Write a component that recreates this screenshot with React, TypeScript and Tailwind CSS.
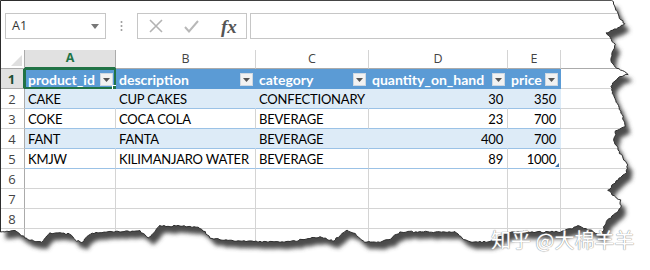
import React from "react";

const COLS = [
  { letter: "A", w: 91 },
  { letter: "B", w: 140 },
  { letter: "C", w: 113 },
  { letter: "D", w: 139 },
  { letter: "E", w: 53 },
  { letter: "F", w: 120 },
];

const TABLE = [
  ["product_id", "description", "category", "quantity_on_hand", "price"],
  ["CAKE", "CUP CAKES", "CONFECTIONARY", "30", "350"],
  ["COKE", "COCA COLA", "BEVERAGE", "23", "700"],
  ["FANT", "FANTA", "BEVERAGE", "400", "700"],
  ["KMJW", "KILIMANJARO WATER", "BEVERAGE", "89", "1000"],
];

const ROW_COUNT = 9;

// key points of the torn right + bottom edge
const TEAR = [
  [612, 0], [616, 10], [620, 18], [625, 24], [618, 28], [606, 33], [610, 38],
  [615, 44], [611, 60], [614, 66], [622, 71], [628, 74], [618, 78], [612, 83],
  [611, 90], [617, 104], [622, 115], [625, 126], [616, 131], [614, 140],
  [618, 150], [623, 158], [628, 165], [626, 172], [618, 180], [608, 190],
  [614, 196], [620, 200], [621, 208], [615, 214], [608, 220], [604, 227],
  [601, 236], [590, 230], [578, 226], [570, 229], [560, 232], [510, 232],
  [500, 237], [490, 242], [470, 242], [462, 238], [455, 232], [400, 232],
  [392, 238], [380, 242], [365, 242], [355, 234], [347, 230], [340, 236],
  [333, 241], [320, 237], [300, 240], [290, 242], [260, 242], [240, 241],
  [222, 240], [210, 238], [205, 232], [200, 228], [180, 226], [160, 226],
  [153, 233], [148, 238], [140, 231], [110, 232], [92, 233], [82, 242],
  [75, 240], [70, 234], [50, 233], [42, 242], [28, 240], [20, 234],
  [15, 231], [5, 232], [0.5, 232],
];

const jagged = (pts: number[][], step: number, amp: number) => {
  const out: number[][] = [];
  for (let i = 0; i < pts.length - 1; i++) {
    const [x1, y1] = pts[i];
    const [x2, y2] = pts[i + 1];
    const len = Math.hypot(x2 - x1, y2 - y1);
    const n = Math.max(1, Math.round(len / step));
    const nx = -(y2 - y1) / len;
    const ny = (x2 - x1) / len;
    for (let k = 0; k < n; k++) {
      const t = k / n;
      const r = Math.sin((out.length + 1) * 12.9898) * 43758.5453;
      const j = (r - Math.floor(r) - 0.5) * amp;
      out.push([x1 + (x2 - x1) * t + nx * j, y1 + (y2 - y1) * t + ny * j]);
    }
  }
  out.push(pts[pts.length - 1]);
  return out;
};

const edge = jagged(TEAR, 2, 1.6);
const paper =
  "M0.5 0.5 " +
  edge.map(([x, y]) => `L${x.toFixed(1)} ${y.toFixed(1)}`).join(" ") +
  " Z";
const outside = "M0 0H650V270H0Z " + paper;

const TornEdge = () => (
  <svg className="absolute inset-0" width={650} height={270}>
    <defs>
      <clipPath id="outside">
        <path d={outside} clipRule="evenodd" />
      </clipPath>
      <filter id="blur" x="-10%" y="-10%" width="120%" height="120%">
        <feGaussianBlur stdDeviation="2.2" />
      </filter>
    </defs>
    <path d={outside} fill="#fff" fillRule="evenodd" />
    <g clipPath="url(#outside)">
      <path d={paper} transform="translate(5 7)" fill="#4b4b4b" filter="url(#blur)" />
    </g>
    <path d={paper} fill="none" stroke="#2d2d2d" strokeWidth={1} />
  </svg>
);

const FilterButton = () => (
  <div className="flex h-[13px] w-[13px] shrink-0 items-center justify-center border border-[#cfd8e2] bg-[#f2f2f2]">
    <svg width="7" height="4" viewBox="0 0 7 4">
      <path d="M0 0H7L3.5 4Z" fill="#555" />
    </svg>
  </div>
);

const cellBg = (r: number) => {
  if (r === 1) return "bg-[#5b9bd5] border-r-[#5b9bd5] border-b-[#5b9bd5]";
  if (r === 2 || r === 4) return "bg-[#ddebf7] border-r-[#ddebf7] border-b-[#9bc2e6]";
  if (r === 3 || r === 5) return "bg-white border-r-[#d4d4d4] border-b-[#9bc2e6]";
  return "bg-white border-r-[#d4d4d4] border-b-[#d4d4d4]";
};

export default function App() {
  return (
    <div className="relative h-[270px] w-[650px] overflow-hidden bg-white font-['Open_Sans',sans-serif]">
      {/* formula bar */}
      <div className="flex h-[50px] items-start pl-[5px] pt-[13px]">
        <div className="flex h-[26px] w-[101px] items-center justify-between border border-[#c6c6c6] pl-[6px] pr-[6px] text-[12.5px] text-[#333]">
          <span>A1</span>
          <svg width="8" height="5" viewBox="0 0 8 5">
            <path d="M0 0H8L4 5Z" fill="#777" />
          </svg>
        </div>
        <div className="flex h-[26px] w-[31px] items-center justify-center">
          <svg width="3" height="12" viewBox="0 0 3 12">
            <circle cx="1.5" cy="2" r="1" fill="#999" />
            <circle cx="1.5" cy="6" r="1" fill="#999" />
            <circle cx="1.5" cy="10" r="1" fill="#999" />
          </svg>
        </div>
        <div className="flex h-[26px] w-[110px] items-center border border-[#c6c6c6] pl-[11px]">
          <svg width="14" height="14" viewBox="0 0 14 14">
            <path d="M1 1L13 13M13 1L1 13" stroke="#b3b3b3" strokeWidth="1.6" />
          </svg>
          <svg className="ml-[21px]" width="15" height="13" viewBox="0 0 15 13">
            <path d="M1 7L5 11.5L14 1" fill="none" stroke="#b8b8b8" strokeWidth="2" />
          </svg>
          <span className="ml-[22px] font-['Liberation_Serif',serif] text-[19px] font-bold italic leading-none text-[#555]">
            fx
          </span>
        </div>
        <div className="ml-[3px] h-[26px] flex-1 border border-[#c6c6c6]" />
      </div>

      {/* sheet grid */}
      <div className="grid grid-cols-[25px_91px_140px_113px_139px_53px_120px]">
        {/* column headers */}
        <div className="relative h-[19px] border-r border-b border-[#ababab] bg-white">
          <svg className="absolute bottom-[2px] right-[2px]" width="11" height="11" viewBox="0 0 11 11">
            <path d="M11 0V11H0Z" fill="#dfdfdf" />
          </svg>
        </div>
        {COLS.map((c) =>
          c.letter === "A" ? (
            <div
              key={c.letter}
              className="flex h-[19px] items-center justify-center border-r border-b-2 border-r-[#ababab] border-b-[#217346] bg-[#e1e1e1] text-[12.5px] font-bold text-[#217346]"
            >
              {c.letter}
            </div>
          ) : (
            <div
              key={c.letter}
              className="flex h-[19px] items-center justify-center border-r border-b border-r-[#d4d4d4] border-b-[#ababab] bg-white text-[12.5px] text-[#444]"
            >
              {c.letter}
            </div>
          )
        )}

        {/* rows */}
        {Array.from({ length: ROW_COUNT }, (_, i) => i + 1).map((r) => (
          <React.Fragment key={r}>
            {r === 1 ? (
              <div className="flex h-[20px] items-end justify-center border-r-2 border-b border-r-[#217346] border-b-[#ababab] bg-[#e1e1e1] text-[13px] font-bold leading-[18px] text-[#1e4e33]">
                {r}
              </div>
            ) : (
              <div className="flex h-[20px] items-end justify-center border-r border-b border-r-[#ababab] border-b-[#d4d4d4] bg-white text-[13px] leading-[18px] text-[#444]">
                {r}
              </div>
            )}
            {COLS.map((c, ci) => {
              const inTable = r <= 5 && ci < 5;
              const val = inTable ? TABLE[r - 1][ci] : "";
              const numeric = inTable && r > 1 && ci >= 3;
              const head = r === 1 && inTable;
              return (
                <div
                  key={c.letter}
                  className={`relative flex h-[20px] items-end border-r border-b font-['Lato',sans-serif] leading-[17px] ${
                    inTable ? cellBg(r) : "bg-white border-r-[#d4d4d4] border-b-[#d4d4d4]"
                  } ${numeric ? "justify-end pr-[4px]" : "justify-between pl-[3px] pr-[2px]"} ${
                    head ? "text-[14px] font-bold text-white" : "text-[13px] tracking-[-0.2px] text-black"
                  }`}
                >
                  <span className="whitespace-nowrap">{val}</span>
                  {head && (
                    <div className="mb-[2px]">
                      <FilterButton />
                    </div>
                  )}
                  {r === 1 && ci === 0 && (
                    <div className="absolute -left-[1px] -top-[1px] h-[21px] w-[92px] border-2 border-[#217346]">
                      <div className="absolute -bottom-[4px] -right-[4px] h-[6px] w-[6px] border border-white bg-[#217346]" />
                    </div>
                  )}
                  {r === 5 && ci === 4 && (
                    <svg className="absolute bottom-[1px] right-[1px]" width="4" height="4" viewBox="0 0 4 4">
                      <path d="M4 0V4H0Z" fill="#3a6ea5" />
                    </svg>
                  )}
                </div>
              );
            })}
          </React.Fragment>
        ))}
      </div>

      <TornEdge />

      <div className="absolute left-[491px] top-[228px] font-['Noto_Sans_CJK_SC',sans-serif] text-[20px] leading-[24px] whitespace-nowrap text-white [text-shadow:0_0_1px_#888,0_0_1px_#999]">
        知乎 @大棉羊羊
      </div>
    </div>
  );
}
